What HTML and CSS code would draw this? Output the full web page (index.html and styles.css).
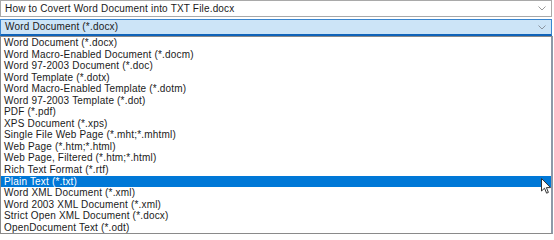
FILE: index.html
```html
<!DOCTYPE html>
<html>
<head>
<meta charset="utf-8">
<link rel="stylesheet" href="styles.css">
</head>
<body>
<div class="page">
  <div class="field">
    <span class="label">How to Covert Word Document into TXT File.docx</span>
    <svg class="chev" width="8" height="5" viewBox="0 0 8 5"><path d="M0.5 0.5 L4 4 L7.5 0.5" fill="none" stroke="#999" stroke-width="1"/></svg>
  </div>
  <div class="field select">
    <span class="label">Word Document (*.docx)</span>
    <svg class="chev" width="8" height="5" viewBox="0 0 8 5"><path d="M0.5 0.5 L4 4 L7.5 0.5" fill="none" stroke="#8a94a0" stroke-width="1"/></svg>
  </div>
  <ul class="list">
    <li>Word Document (*.docx)</li>
    <li>Word Macro-Enabled Document (*.docm)</li>
    <li>Word 97-2003 Document (*.doc)</li>
    <li>Word Template (*.dotx)</li>
    <li>Word Macro-Enabled Template (*.dotm)</li>
    <li>Word 97-2003 Template (*.dot)</li>
    <li>PDF (*.pdf)</li>
    <li>XPS Document (*.xps)</li>
    <li>Single File Web Page (*.mht;*.mhtml)</li>
    <li>Web Page (*.htm;*.html)</li>
    <li>Web Page, Filtered (*.htm;*.html)</li>
    <li>Rich Text Format (*.rtf)</li>
    <li class="active">Plain Text (*.txt)</li>
    <li>Word XML Document (*.xml)</li>
    <li>Word 2003 XML Document (*.xml)</li>
    <li>Strict Open XML Document (*.docx)</li>
    <li>OpenDocument Text (*.odt)</li>
  </ul>
  <svg class="cursor" width="11" height="17" viewBox="0 0 11 17"><path d="M0.5 0.5 L0.5 13 L3.5 10.2 L5.6 15.2 L7.4 14.4 L5.4 9.6 L9.5 9.6 Z" fill="#fff" stroke="#333" stroke-width="1" stroke-linejoin="round"/></svg>
</div>
</body>
</html>
```

FILE: styles.css
```css
html, body {
  margin: 0;
  padding: 0;
  background: #ffffff;
}
.page {
  position: relative;
  width: 554px;
  height: 235px;
  font-family: "Liberation Sans", Arial, sans-serif;
  font-size: 10px;
  letter-spacing: 0.18px;
  color: #1a1a1a;
  display: flex;
  flex-direction: column;
  gap: 2px;
}
.field {
  box-sizing: border-box;
  width: 552px;
  height: 17px;
  border: 1px solid #a9a9a9;
  background: #fff;
  display: flex;
  align-items: center;
  justify-content: space-between;
  padding: 0 5px 0 4px;
  line-height: 12px;
}
.select {
  background: #cce4f7;
  border: 1px solid #3a86cf;
  border-bottom: 2px solid #0f63b9;
}
.chev {
  display: block;
}
.list {
  box-sizing: border-box;
  list-style: none;
  margin: -2px 0 0 0;
  padding: 0;
  width: 553px;
  border: 1px solid #8a8a8a;
  border-right: 2px solid #8d9aa8;
  background: #fff;
}
.list li {
  height: 11.55px;
  line-height: 11.55px;
  padding-left: 3px;
  white-space: nowrap;
}
.list li.active {
  background: #0078d7;
  color: #fff;
}
.cursor {
  position: absolute;
  left: 541px;
  top: 178px;
}
```
